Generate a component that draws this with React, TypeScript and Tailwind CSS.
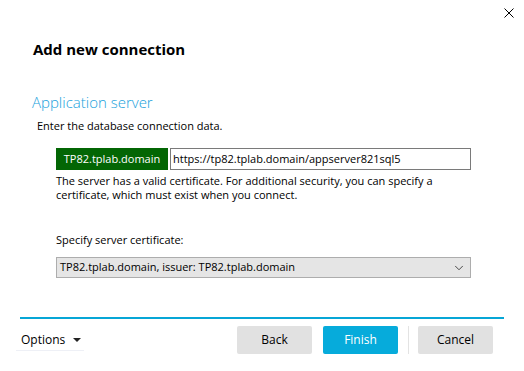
import { ChevronDown } from 'lucide-react'

const FONT = "font-['Open_Sans','Noto_Sans',sans-serif]"

export default function App () {
  return (
    <div className={`flex h-[371px] w-[524px] flex-col bg-white text-black ${FONT}`}>
      {/* window bar */}
      <div className="flex h-[40px] justify-end pr-[10px] pt-[8px]">
        <button className="h-[10px] w-[10px] text-black">
          <svg width="10" height="10" viewBox="0 0 10 10" fill="none" stroke="currentColor" strokeWidth="1">
            <path d="M0.5 0.5 L9.5 9.5 M9.5 0.5 L0.5 9.5" />
          </svg>
        </button>
      </div>

      <h1 className="pl-[33px] text-[15px] font-bold leading-[18px]">Add new connection</h1>

      <h2 className="mt-[34px] pl-[32px] text-[15px] font-light leading-[20px] text-[#179fdc]">
        Application server
      </h2>

      <p className="mt-[6px] pl-[37px] text-[11px] leading-[16px]">Enter the database connection data.</p>

      <div className="mt-[14px] flex flex-col pl-[56px] pr-[53px]">
        <div className="flex h-[22px] gap-[2px]">
          <span className="flex w-[112px] items-center justify-center bg-[#036604] text-[11px] text-white">
            TP82.tplab.domain
          </span>
          <div className="flex flex-1 items-center border border-[#7a7a7a] px-[2px] text-[11px]">
            https://tp82.tplab.domain/appserver821sql5
          </div>
        </div>

        <p className="mt-[4px] text-[11px] leading-[14px]">
          The server has a valid certificate. For additional security, you can specify a
          certificate, which must exist when you connect.
        </p>

        <p className="mt-[31px] text-[11px] leading-[14px]">Specify server certificate:</p>

        <div className="mt-[10px] flex h-[21px] items-center justify-between border border-[#adadad] bg-[#e5e5e5] pl-[3px] pr-[4px] text-[11px]">
          <span>TP82.tplab.domain, issuer: TP82.tplab.domain</span>
          <ChevronDown size={14} strokeWidth={1.5} className="text-[#333]" />
        </div>
      </div>

      <div className="mx-[20px] mt-[39px] h-[2px] bg-[#06a6d6]" />

      {/* footer */}
      <div className="mt-[7px] flex items-start pl-[16px] pr-[31px]">
        <button className="mt-[3px] flex h-[22px] w-[68px] items-center gap-[8px] border-b border-[#eef0f6] pl-[5px] text-[12px]">
          Options
          <span className="h-0 w-0 border-x-[4px] border-t-[4px] border-x-transparent border-t-[#222]" />
        </button>
        <div className="ml-auto flex items-stretch">
          <button className="h-[28px] w-[75px] rounded-[2px] bg-[#e1e1e1] text-[12px]">Back</button>
          <button className="ml-[11px] h-[28px] w-[75px] rounded-[2px] bg-[#06abdb] text-[12px] text-white">Finish</button>
          <div className="ml-[10px] w-px bg-[#e3e3e3]" />
          <button className="ml-[9px] h-[28px] w-[75px] rounded-[2px] bg-[#e1e1e1] text-[12px]">Cancel</button>
        </div>
      </div>
    </div>
  )
}
